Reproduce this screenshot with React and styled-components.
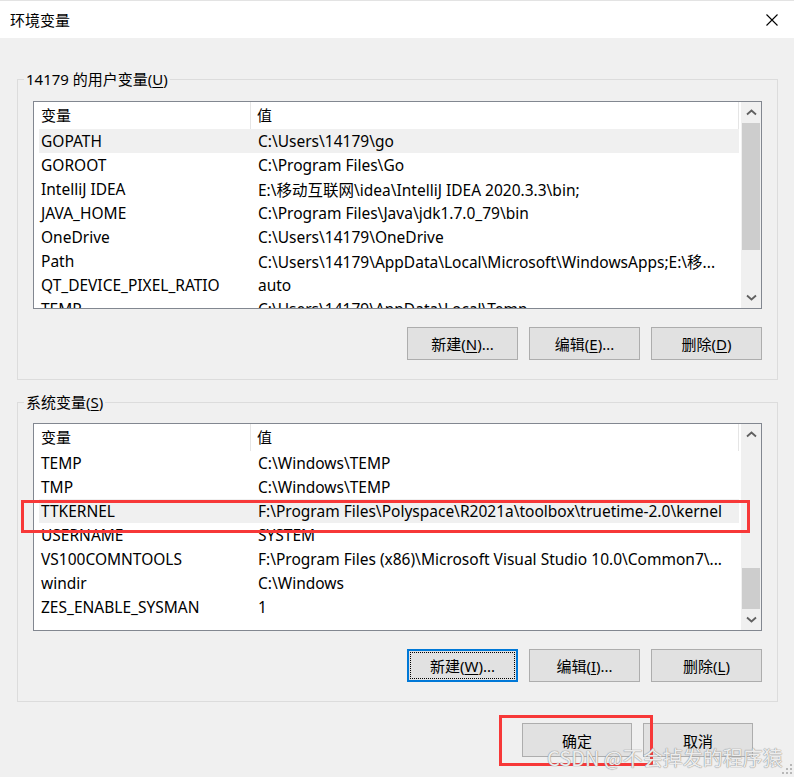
import React from 'react';
import styled, { createGlobalStyle } from 'styled-components';

const GlobalStyle = createGlobalStyle`
  html, body {
    margin: 0;
    padding: 0;
    background: #f0f0f0;
  }
  body {
    font-family: "Noto Sans", "Noto Sans CJK SC", sans-serif;
    font-size: 15px;
    color: #000;
  }
`;

const userVars = [
  { name: 'GOPATH', value: 'C:\\Users\\14179\\go', selected: true },
  { name: 'GOROOT', value: 'C:\\Program Files\\Go' },
  { name: 'IntelliJ IDEA', value: 'E:\\移动互联网\\idea\\IntelliJ IDEA 2020.3.3\\bin;' },
  { name: 'JAVA_HOME', value: 'C:\\Program Files\\Java\\jdk1.7.0_79\\bin' },
  { name: 'OneDrive', value: 'C:\\Users\\14179\\OneDrive' },
  { name: 'Path', value: 'C:\\Users\\14179\\AppData\\Local\\Microsoft\\WindowsApps;E:\\移...' },
  { name: 'QT_DEVICE_PIXEL_RATIO', value: 'auto' },
  { name: 'TEMP', value: 'C:\\Users\\14179\\AppData\\Local\\Temp' },
];

const systemVars = [
  { name: 'TEMP', value: 'C:\\Windows\\TEMP' },
  { name: 'TMP', value: 'C:\\Windows\\TEMP' },
  { name: 'TTKERNEL', value: 'F:\\Program Files\\Polyspace\\R2021a\\toolbox\\truetime-2.0\\kernel', selected: true },
  { name: 'USERNAME', value: 'SYSTEM' },
  { name: 'VS100COMNTOOLS', value: 'F:\\Program Files (x86)\\Microsoft Visual Studio 10.0\\Common7\\...' },
  { name: 'windir', value: 'C:\\Windows' },
  { name: 'ZES_ENABLE_SYSMAN', value: '1' },
];

const Window = styled.div`
  position: relative;
  width: 794px;
  height: 777px;
  overflow: hidden;
  background: #f0f0f0;
  display: flex;
  flex-direction: column;
`;

const TitleBar = styled.div`
  height: 38px;
  flex: none;
  background: #fff;
  border-top: 1px solid #e3e3e3;
  box-sizing: border-box;
  display: flex;
  align-items: center;
  justify-content: space-between;
  padding: 0 16px 0 10px;
`;

const Title = styled.span`
  font-family: "Noto Sans CJK SC", sans-serif;
  font-size: 15px;
  line-height: 20px;
`;

const CloseIcon = styled.svg`
  width: 12px;
  height: 12px;
  display: block;
`;

const Content = styled.div`
  display: flex;
  flex-direction: column;
  padding: 0 16px 0 17px;
`;

const Group = styled.fieldset`
  margin: ${p => p.$top}px 0 0 0;
  min-width: 0;
  border: 1px solid #dcdcdc;
  padding: ${p => p.$pad}px 15px 19px 15px;
  display: flex;
  flex-direction: column;
`;

const Legend = styled.legend`
  margin-left: -9px;
  padding: 0 2px;
  font-size: 15px;
  line-height: 20px;
  font-family: "Noto Sans", "Noto Sans CJK SC", sans-serif;
`;

const Key = styled.span`
  text-decoration: underline;
  text-underline-offset: 2px;
  text-decoration-thickness: 1px;
`;

const ListBox = styled.div`
  height: 208px;
  box-sizing: border-box;
  border: 1px solid #828790;
  background: #fff;
  display: flex;
`;

const ListArea = styled.div`
  flex: 1;
  min-width: 0;
  overflow: hidden;
  padding: 0 1px 0 5px;
`;

const HeaderRow = styled.div`
  display: flex;
  height: 27px;
  align-items: center;
  border-right: 1px solid #e5e5e5;
`;

const HeaderCell = styled.div`
  width: ${p => (p.$first ? '212px' : 'auto')};
  flex: ${p => (p.$first ? 'none' : '1')};
  box-sizing: border-box;
  height: 100%;
  display: flex;
  align-items: center;
  padding-left: ${p => (p.$first ? '2px' : '6px')};
  border-right: ${p => (p.$first ? '1px solid #e5e5e5' : 'none')};
  font-family: "Noto Sans CJK SC", sans-serif;
  padding-bottom: 2px;
`;

const Row = styled.div`
  display: flex;
  height: 24px;
  align-items: center;
  background: ${p => (p.$selected ? '#f0f0f0' : 'transparent')};
  white-space: nowrap;
  font-size: 15.5px;
`;

const NameCell = styled.div`
  width: 212px;
  flex: none;
  box-sizing: border-box;
  padding-left: 2px;
  overflow: hidden;
`;

const ValueCell = styled.div`
  flex: 1;
  padding-left: 7px;
  overflow: hidden;
`;

const ScrollBar = styled.div`
  width: 20px;
  flex: none;
  margin-left: 1px;
  background: #f0f0f0;
  display: flex;
  flex-direction: column;
`;

const ArrowButton = styled.div`
  height: 21px;
  flex: none;
  display: flex;
  align-items: center;
  justify-content: center;
`;

const Track = styled.div`
  flex: 1;
  display: flex;
  flex-direction: column;
  justify-content: ${p => p.$align};
`;

const Thumb = styled.div`
  height: ${p => p.$h}px;
  margin: 0 1px;
  background: #cdcdcd;
`;

const ButtonRow = styled.div`
  display: flex;
  justify-content: flex-end;
  gap: 11px;
  margin-top: ${p => p.$top}px;
  padding-right: ${p => p.$right || 0}px;
`;

const Button = styled.button`
  width: ${p => p.$w || 111}px;
  height: ${p => p.$h || 33}px;
  box-sizing: border-box;
  background: #e1e1e1;
  border: ${p => (p.$focused ? '2px solid #0078d7' : '1px solid #adadad')};
  outline: ${p => (p.$focused ? '1px dotted #000' : 'none')};
  outline-offset: -4px;
  border-radius: 0;
  padding: 0;
  font-family: "Noto Sans", "Noto Sans CJK SC", sans-serif;
  font-size: 15px;
  color: #000;
  cursor: default;
`;

const Chevron = ({ down }) => (
  <svg width="11" height="7" viewBox="0 0 11 7">
    <polyline
      points={down ? '1,1.5 5.5,5.5 10,1.5' : '1,5.5 5.5,1.5 10,5.5'}
      fill="none"
      stroke="#606060"
      strokeWidth="1.8"
    />
  </svg>
);

const VarList = ({ rows, thumbHeight, thumbAlign }) => (
  <ListBox>
    <ListArea>
      <HeaderRow>
        <HeaderCell $first>变量</HeaderCell>
        <HeaderCell>值</HeaderCell>
      </HeaderRow>
      {rows.map(r => (
        <Row key={r.name} $selected={r.selected}>
          <NameCell>{r.name}</NameCell>
          <ValueCell>{r.value}</ValueCell>
        </Row>
      ))}
    </ListArea>
    <ScrollBar>
      <ArrowButton><Chevron /></ArrowButton>
      <Track $align={thumbAlign}>
        <Thumb $h={thumbHeight} />
      </Track>
      <ArrowButton><Chevron down /></ArrowButton>
    </ScrollBar>
  </ListBox>
);

const RedBox = styled.div`
  position: absolute;
  left: ${p => p.$x}px;
  top: ${p => p.$y}px;
  width: ${p => p.$w}px;
  height: ${p => p.$h}px;
  box-sizing: border-box;
  border: 3px solid #f73838;
  pointer-events: none;
`;

const Watermark = styled.div`
  position: absolute;
  left: 547px;
  top: 745px;
  font-family: "Noto Sans CJK SC", sans-serif;
  font-size: 20px;
  line-height: 26px;
  white-space: nowrap;
  color: rgba(255, 255, 255, 0.85);
  text-shadow: 0 0 1px #8a8a8a, 0 0 1px #8a8a8a;
  pointer-events: none;
`;

const Grip = styled.svg`
  position: absolute;
  right: 2px;
  bottom: 3px;
`;

export default function App() {
  return (
    <>
      <GlobalStyle />
      <Window>
        <TitleBar>
          <Title>环境变量</Title>
          <CloseIcon viewBox="0 0 12 12">
            <path d="M0.5 0.5 L11.5 11.5 M11.5 0.5 L0.5 11.5" stroke="#000" strokeWidth="1.1" />
          </CloseIcon>
        </TitleBar>

        <Content>
          <Group $top={31} $pad={12}>
            <Legend>14179 的用户变量(<Key>U</Key>)</Legend>
            <VarList rows={userVars} thumbHeight={127} thumbAlign="flex-start" />
            <ButtonRow $top={18}>
              <Button>新建(<Key>N</Key>)...</Button>
              <Button>编辑(<Key>E</Key>)...</Button>
              <Button>删除(<Key>D</Key>)</Button>
            </ButtonRow>
          </Group>

          <Group $top={12} $pad={11}>
            <Legend>系统变量(<Key>S</Key>)</Legend>
            <VarList rows={systemVars} thumbHeight={41} thumbAlign="flex-end" />
            <ButtonRow $top={18}>
              <Button $focused>新建(<Key>W</Key>)...</Button>
              <Button>编辑(<Key>I</Key>)...</Button>
              <Button>删除(<Key>L</Key>)</Button>
            </ButtonRow>
          </Group>

          <ButtonRow $top={21} $right={25}>
            <Button $w={110} $h={34}>确定</Button>
            <Button $w={110} $h={34}>取消</Button>
          </ButtonRow>
        </Content>

        <RedBox $x={21} $y={500} $w={729} $h={33} />
        <RedBox $x={499} $y={715} $w={154} $h={51} />
        <Watermark>CSDN @不会掉发的程序猿</Watermark>
        <Grip width="10" height="10" viewBox="0 0 10 10">
          {[[8, 0], [8, 4], [4, 4], [8, 8], [4, 8], [0, 8]].map(([x, y]) => (
            <rect key={`${x}-${y}`} x={x} y={y} width="2" height="2" fill="#b8b8b8" />
          ))}
        </Grip>
      </Window>
    </>
  );
}
